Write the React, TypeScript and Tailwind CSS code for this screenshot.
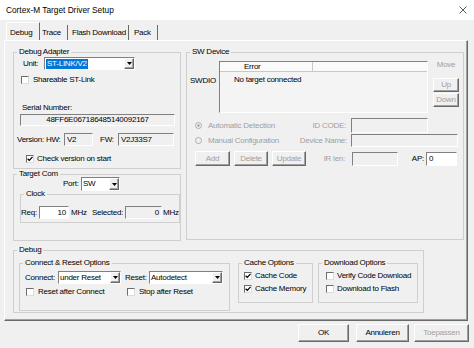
import React from "react";

const raised =
  "border border-t-white border-l-white border-r-[#696969] border-b-[#696969] shadow-[inset_-1px_-1px_0_#a0a0a0]";
const sunken = "border border-t-[#808080] border-l-[#808080] border-r-white border-b-white";
const dim = "text-[#a0a0a0]";

function Combo({ className, children }: { className: string; children: React.ReactNode }) {
  return (
    <div className={`${sunken} bg-white flex items-center shrink-0 ${className}`}>
      <div className="flex-1 pl-[1px] whitespace-nowrap overflow-hidden">{children}</div>
      <div className={`${raised} bg-[#f0f0f0] w-[10px] self-stretch flex items-center justify-center`}>
        <svg width="5" height="3" viewBox="0 0 5 3">
          <path d="M0 0H5L2.5 3Z" fill="#000" />
        </svg>
      </div>
    </div>
  );
}

function Check({ on }: { on?: boolean }) {
  return (
    <span className="w-[8px] h-[8px] shrink-0 bg-white border border-t-[#6d6d6d] border-l-[#6d6d6d] border-r-[#dcdcdc] border-b-[#dcdcdc] flex items-center justify-center">
      {on && (
        <svg width="6" height="6" viewBox="0 0 6 6">
          <path d="M0.6 2.7 L2.3 4.4 L5.5 0.9" stroke="#000" strokeWidth="1.3" fill="none" />
        </svg>
      )}
    </span>
  );
}

function Radio({ on }: { on?: boolean }) {
  return (
    <svg width="7" height="7" viewBox="0 0 7 7" className="shrink-0">
      <circle cx="3.5" cy="3.5" r="3" fill="#f0f0f0" stroke="#a0a0a0" strokeWidth="0.8" />
      {on && <circle cx="3.5" cy="3.5" r="1.2" fill="#a0a0a0" />}
    </svg>
  );
}

function Group({ title, className, children }: { title: string; className: string; children?: React.ReactNode }) {
  return (
    <fieldset className={`border border-[#cfcfcf] shrink-0 ${className}`}>
      <legend className="ml-[3px] px-[2px] leading-[10px]">{title}</legend>
      {children}
    </fieldset>
  );
}

function Btn({ className, children, disabled }: { className: string; children: React.ReactNode; disabled?: boolean }) {
  return (
    <div className={`${raised} bg-[#f0f0f0] flex items-center justify-center shrink-0 ${disabled ? dim : ""} ${className}`}>
      {children}
    </div>
  );
}

export default function App() {
  return (
    <div className="w-[474px] h-[348px] bg-[#f0f0f0] flex flex-col overflow-hidden font-['Liberation_Sans',Arial,sans-serif] text-[8px] leading-[10px] tracking-[-0.25px] text-black">
      {/* Title bar */}
      <div className="h-[20px] shrink-0 bg-white flex items-center justify-between pl-[6px] pr-[7px]">
        <span className="text-[8.3px] tracking-normal">Cortex-M Target Driver Setup</span>
        <svg width="8" height="8" viewBox="0 0 8 8">
          <path d="M0.5 0.5L7.5 7.5M7.5 0.5L0.5 7.5" stroke="#333" strokeWidth="0.8" />
        </svg>
      </div>

      {/* Tabs */}
      <div className="h-[20px] shrink-0 flex items-end pl-[6px]">
        <div className="w-[34px] h-[18px] border-l border-t border-white border-r border-r-[#696969] pl-[3px] pt-[3px] flex items-center">
          Debug
        </div>
        <div className="w-[28px] h-[15px] border-r border-r-[#696969] pl-[2px] flex items-center">Trace</div>
        <div className="w-[61px] h-[15px] border-r border-r-[#696969] pl-[4px] flex items-center whitespace-nowrap">
          Flash Download
        </div>
        <div className="w-[29px] h-[15px] border-r border-r-[#696969] pl-[5px] flex items-center">Pack</div>
      </div>

      {/* Tab page */}
      <div className="ml-[4px] w-[464px] h-[281px] shrink-0 border border-t-white border-l-white border-r-[#696969] border-b-[#696969] shadow-[inset_-1px_-1px_0_#a0a0a0] pl-[8px] pt-[6px] flex flex-col">
        <div className="flex items-start gap-[5px]">
          {/* Left column */}
          <div className="w-[168px] flex flex-col">
            <Group title="Debug Adapter" className="w-[168px] h-[122px]">
              <div className="flex items-center h-[13px] pl-[9px]">
                <span className="w-[21px]">Unit:</span>
                <Combo className="w-[91px] h-[13px]">
                  <span className="bg-[#0078d7] text-white px-[1px] inline-block leading-[10px]">ST-LINK/V2</span>
                </Combo>
              </div>
              <div className="mt-[6px] h-[8px] flex items-center gap-[4px] pl-[7px]">
                <Check />
                <span>Shareable ST-Link</span>
              </div>
              <div className="mt-[19px] pl-[8px]">Serial Number:</div>
              <div className={`mt-[1px] ml-[6px] w-[155px] h-[12px] ${sunken} flex items-center justify-center`}>
                48FF6E067186485140092167
              </div>
              <div className="mt-[7px] h-[13px] flex items-center pl-[3px]">
                <span className="w-[47px] whitespace-nowrap">Version: HW:</span>
                <div className={`w-[29px] h-[13px] ${sunken} flex items-center pl-[2px]`}>V2</div>
                <span className="ml-[7px] w-[18px]">FW:</span>
                <div className={`w-[56px] h-[13px] ${sunken} flex items-center pl-[2px]`}>V2J33S7</div>
              </div>
              <div className="mt-[9px] h-[8px] flex items-center gap-[3px] pl-[12px]">
                <Check on />
                <span>Check version on start</span>
              </div>
            </Group>

            <Group title="Target Com" className="w-[168px] h-[72px]">
              <div className="-mt-[2px] h-[14px] flex items-center pl-[49px]">
                <span className="w-[18px]">Port:</span>
                <Combo className="w-[39px] h-[14px]">SW</Combo>
              </div>
              <Group title="Clock" className="-mt-[2px] ml-[6px] w-[157px] h-[34px]">
                <div className="mt-[7px] h-[13px] flex items-center">
                  <span className="w-[18px]">Req:</span>
                  <div className={`w-[30px] h-[13px] bg-white ${sunken} flex items-center justify-end pr-[2px]`}>10</div>
                  <span className="ml-[2px] w-[21px]">MHz</span>
                  <span className="w-[33px]">Selected:</span>
                  <div className={`w-[37px] h-[13px] ${sunken} flex items-center justify-end pr-[2px]`}>0</div>
                  <span className="ml-[1px]">MHz</span>
                </div>
              </Group>
            </Group>
          </div>

          {/* SW Device */}
          <Group title="SW Device" className="w-[278px] h-[193px]">
            <div className="flex items-start">
              <span className="mt-[19px] ml-[3px] w-[29px]">SWDIO</span>
              <div className={`mt-[4px] w-[209px] h-[52px] ${sunken} bg-[#f4f4f4] flex flex-col`}>
                <div className="h-[10px] flex bg-[#fafafa] border-b border-[#c8c8c8]">
                  <div className="w-[93px] border-r border-[#c8c8c8] pl-[24px] flex items-center">Error</div>
                  <div className="flex-1" />
                </div>
                <div className="pt-[3px] pl-[14px]">No target connected</div>
              </div>
              <div className="ml-[5px] w-[26px] flex flex-col">
                <span className={`mt-[3px] text-center ${dim}`}>Move</span>
                <Btn disabled className="mt-[8px] w-[26px] h-[14px]">
                  Up
                </Btn>
                <Btn disabled className="mt-[1px] w-[26px] h-[14px]">
                  Down
                </Btn>
              </div>
            </div>

            <div className="mt-[5px] h-[15px] flex items-center pl-[8px]">
              <div className={`w-[100px] flex items-center gap-[6px] ${dim}`}>
                <Radio on />
                <span className="whitespace-nowrap">Automatic Detection</span>
              </div>
              <span className={`w-[56px] text-right pr-[5px] ${dim}`}>ID CODE:</span>
              <div className={`w-[77px] h-[15px] ${sunken}`} />
            </div>
            <div className="mt-[1px] h-[13px] flex items-center pl-[8px]">
              <div className={`w-[100px] flex items-center gap-[6px] ${dim}`}>
                <Radio />
                <span className="whitespace-nowrap">Manual Configuration</span>
              </div>
              <span className={`w-[56px] text-right pr-[4px] whitespace-nowrap ${dim}`}>Device Name:</span>
              <div className={`w-[107px] h-[13px] ${sunken}`} />
            </div>
            <div className="mt-[4px] h-[15px] flex items-center pl-[8px]">
              <Btn disabled className="w-[35px] h-[15px]">
                Add
              </Btn>
              <Btn disabled className="ml-[4px] w-[34px] h-[15px]">
                Delete
              </Btn>
              <Btn disabled className="ml-[4px] w-[34px] h-[15px]">
                Update
              </Btn>
              <span className={`w-[46px] text-right pr-[7px] ${dim}`}>IR len:</span>
              <div className={`w-[46px] h-[14px] ${sunken}`} />
              <span className="w-[28px] text-right pr-[2px]">AP:</span>
              <div className={`w-[31px] h-[14px] bg-white ${sunken} flex items-center pl-[2px]`}>0</div>
            </div>
          </Group>
        </div>

        {/* Debug */}
        <Group title="Debug" className="mt-[4px] w-[411px] h-[68px]">
          <div className="flex items-start">
            <Group title="Connect & Reset Options" className="mt-[3px] ml-[5px] w-[211px] h-[53px]">
              <div className="mt-[3px] h-[13px] flex items-center pl-[5px]">
                <span className="w-[33px]">Connect:</span>
                <Combo className="w-[63px] h-[13px]">under Reset</Combo>
                <span className="ml-[4px] w-[24px]">Reset:</span>
                <Combo className="w-[74px] h-[13px]">Autodetect</Combo>
              </div>
              <div className="mt-[4px] h-[8px] flex items-center pl-[6px]">
                <Check />
                <span className="ml-[4px] w-[89px]">Reset after Connect</span>
                <Check />
                <span className="ml-[4px]">Stop after Reset</span>
              </div>
            </Group>

            <Group title="Cache Options" className="mt-[3px] ml-[8px] w-[75px] h-[45px]">
              <div className="mt-[4px] h-[8px] flex items-center gap-[3px] pl-[5px]">
                <Check on />
                <span>Cache Code</span>
              </div>
              <div className="mt-[5px] h-[8px] flex items-center gap-[3px] pl-[5px]">
                <Check on />
                <span>Cache Memory</span>
              </div>
            </Group>

            <Group title="Download Options" className="mt-[3px] ml-[5px] w-[100px] h-[45px]">
              <div className="mt-[4px] h-[8px] flex items-center gap-[3px] pl-[7px]">
                <Check />
                <span className="whitespace-nowrap">Verify Code Download</span>
              </div>
              <div className="mt-[5px] h-[8px] flex items-center gap-[3px] pl-[7px]">
                <Check />
                <span>Download to Flash</span>
              </div>
            </Group>
          </div>
        </Group>
      </div>

      {/* Dialog buttons */}
      <div className="mt-[3px] h-[18px] flex justify-end pr-[5px]">
        <Btn className="w-[51px] h-[18px] border-r-[#404040] border-b-[#404040]">OK</Btn>
        <Btn className="ml-[7px] w-[53px] h-[18px]">Annuleren</Btn>
        <Btn disabled className="ml-[5px] w-[55px] h-[18px]">
          Toepassen
        </Btn>
      </div>
    </div>
  );
}
